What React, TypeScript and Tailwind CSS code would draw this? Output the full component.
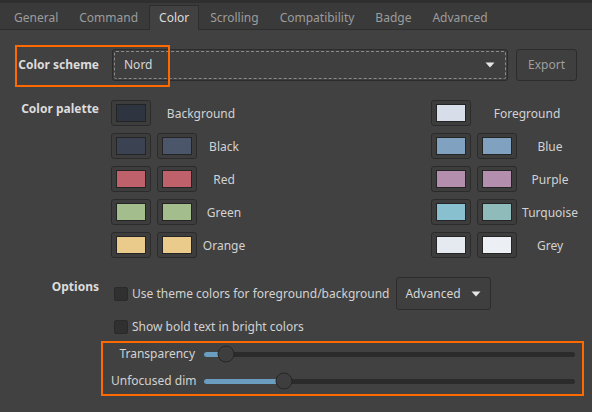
import type { ReactNode } from "react";

const tabs = ["General", "Command", "Color", "Scrolling", "Compatibility", "Badge", "Advanced"];

type Entry = { label: string; colors: string[] };

const leftPalette: Entry[] = [
  { label: "Background", colors: ["#2e3440"] },
  { label: "Black", colors: ["#3b4252", "#4c566a"] },
  { label: "Red", colors: ["#bf616a", "#bf616a"] },
  { label: "Green", colors: ["#a3be8c", "#a3be8c"] },
  { label: "Orange", colors: ["#ebcb8b", "#ebcb8b"] },
];

const rightPalette: Entry[] = [
  { label: "Foreground", colors: ["#d8dee9"] },
  { label: "Blue", colors: ["#81a1c1", "#81a1c1"] },
  { label: "Purple", colors: ["#b48ead", "#b48ead"] },
  { label: "Turquoise", colors: ["#88c0d0", "#8fbcbb"] },
  { label: "Grey", colors: ["#e5e9f0", "#eceff4"] },
];

function Swatch({ color }: { color: string }) {
  return (
    <div className="h-[26px] w-[40px] rounded-[3px] border border-[#2b2b2b] bg-[#3d3d3d] flex items-center justify-center">
      <div className="h-[18px] w-[30px] border border-[#242424]" style={{ backgroundColor: color }} />
    </div>
  );
}

function Palette({ entries, labelWidth }: { entries: Entry[]; labelWidth: number }) {
  return (
    <div
      className="grid gap-x-[6px] gap-y-[7px]"
      style={{ gridTemplateColumns: `40px 40px ${labelWidth}px` }}
    >
      {entries.map((e) =>
        e.colors.length === 1 ? (
          <div key={e.label} className="contents">
            <Swatch color={e.colors[0]} />
            <div className="col-span-2 flex items-center justify-center whitespace-nowrap pt-[1px] text-[#d2d2d2]">{e.label}</div>
          </div>
        ) : (
          <div key={e.label} className="contents">
            <Swatch color={e.colors[0]} />
            <Swatch color={e.colors[1]} />
            <div className="flex items-center justify-center whitespace-nowrap pt-[1px] text-[#d2d2d2]">{e.label}</div>
          </div>
        )
      )}
    </div>
  );
}

function Arrow() {
  return (
    <svg width="10" height="6" viewBox="0 0 10 6">
      <path d="M0.5 0.5 L9.5 0.5 L5 5.5 Z" fill="#e6e6e6" />
    </svg>
  );
}

function Checkbox({ children }: { children: ReactNode }) {
  return (
    <div className="flex items-center gap-[4px]">
      <div className="h-[14px] w-[14px] rounded-[2px] border border-[#2a2a2a] bg-[#303030]" />
      <span className="whitespace-nowrap text-[#d2d2d2]">{children}</span>
    </div>
  );
}

function Slider({ label, value }: { label: string; value: number }) {
  return (
    <div className="flex items-center h-[20px]">
      <div className="w-[84px] whitespace-nowrap text-right text-[#d2d2d2]">{label}</div>
      <div className="relative ml-[9px] h-[5px] flex-1 rounded-full bg-[#2b2b2b] mr-[2px]">
        <div className="absolute left-0 top-0 h-full rounded-full bg-[#6a9dc0]" style={{ width: `${value}px` }} />
        <div
          className="absolute top-1/2 h-[17px] w-[17px] -translate-x-1/2 -translate-y-1/2 rounded-full border border-[#262626] bg-[#3e3e3e]"
          style={{ left: `${value}px` }}
        />
      </div>
    </div>
  );
}

export default function App() {
  return (
    <div
      className="relative h-[412px] w-[592px] overflow-hidden bg-[#414141] text-[12px] leading-[18px]"
      style={{ fontFamily: '"Noto Sans", "DejaVu Sans", sans-serif' }}
    >
      {/* tab bar */}
      <div className="flex h-[30px] items-end gap-[1px] border-t-[3px] border-[#2f2f2f] bg-[#3a3a3a] pl-[4px] shadow-[inset_0_-1px_0_#2d2d2d]">
        {tabs.map((t) =>
          t === "Color" ? (
            <div
              key={t}
              className="flex h-[25px] items-center border border-b-0 border-[#2d2d2d] bg-[#414141] px-[9px] text-[#dcdcdc]"
            >
              {t}
            </div>
          ) : (
            <div key={t} className="flex h-[25px] items-center px-[10px] text-[#9c9c9c]">
              {t}
            </div>
          )
        )}
      </div>

      <div className="flex flex-col pt-[19px] pr-[15px]">
        {/* color scheme */}
        <div className="flex h-[32px] items-center">
          <div className="w-[99px] text-right font-bold text-[#dcdcdc]">Color scheme</div>
          <div className="ml-[13px] flex h-[32px] flex-1 items-center rounded-[3px] border border-[#2b2b2b] bg-[#3f3f3f] p-[1px]">
            <div className="flex h-full w-full items-center justify-between rounded-[2px] border border-dashed border-[#8a8a8a] pl-[9px] pr-[10px] text-[#d6d6d6]">
              <span>Nord</span>
              <Arrow />
            </div>
          </div>
          <div className="ml-[8px] flex h-[32px] w-[61px] items-center justify-center rounded-[3px] border border-[#2c2c2c] bg-[#3f3f3f] text-[#9e9e9e]">
            Export
          </div>
        </div>

        {/* palette */}
        <div className="mt-[19px] flex">
          <div className="w-[99px] text-right font-bold text-[#dcdcdc]">Color palette</div>
          <div className="ml-[12px] flex flex-1 justify-between">
            <Palette entries={leftPalette} labelWidth={42} />
            <Palette entries={rightPalette} labelWidth={54} />
          </div>
        </div>

        {/* options */}
        <div className="mt-[19px] flex">
          <div className="w-[99px] pt-[1px] text-right font-bold text-[#dcdcdc]">Options</div>
          <div className="ml-[12px] flex flex-1 flex-col">
            <div className="flex h-[33px] items-center pl-[3px]">
              <Checkbox>Use theme colors for foreground/background</Checkbox>
              <div className="ml-[7px] flex h-[33px] w-[95px] items-center rounded-[3px] border border-[#2c2c2c] bg-[#3f3f3f] pl-[8px] text-[#d6d6d6]">
                <span>Advanced</span>
                <span className="ml-[10px] flex">
                  <Arrow />
                </span>
              </div>
            </div>
            <div className="mt-[7px] flex h-[20px] items-center pl-[3px]">
              <Checkbox>Show bold text in bright colors</Checkbox>
            </div>
            <div className="mt-[7px] flex flex-col gap-[7px]">
              <Slider label="Transparency" value={22} />
              <Slider label="Unfocused dim" value={80} />
            </div>
          </div>
        </div>
      </div>

      {/* highlight annotations */}
      <div className="pointer-events-none absolute left-[15px] top-[45px] h-[42px] w-[155px] border-2 border-[#ff6a00]" />
      <div className="pointer-events-none absolute left-[101px] top-[341px] h-[55px] w-[483px] border-2 border-[#ff6a00]" />
    </div>
  );
}
